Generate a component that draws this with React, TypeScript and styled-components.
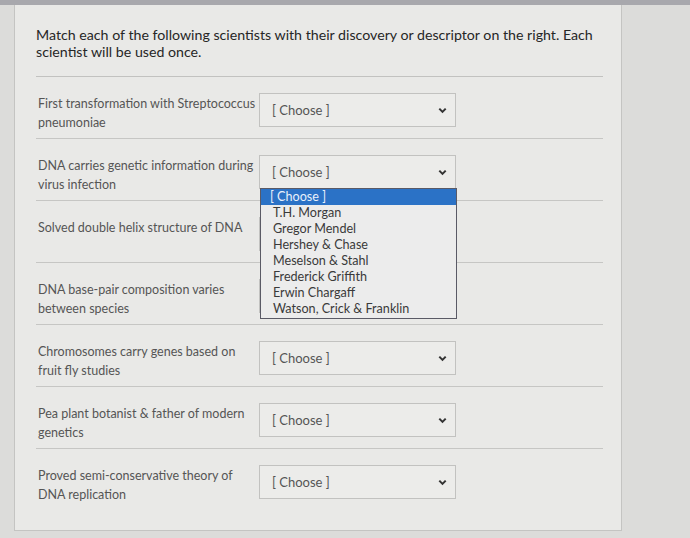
import React from "react";
import styled, { createGlobalStyle } from "styled-components";

const GlobalStyle = createGlobalStyle`
  html, body {
    margin: 0;
    padding: 0;
    background: #dedede;
    font-family: Lato, "Open Sans", sans-serif;
  }
`;

const SCIENTISTS = [
  "T.H. Morgan",
  "Gregor Mendel",
  "Hershey & Chase",
  "Meselson & Stahl",
  "Frederick Griffith",
  "Erwin Chargaff",
  "Watson, Crick & Franklin",
];

const QUESTIONS = [
  "First transformation with Streptococcus pneumoniae",
  "DNA carries genetic information during virus infection",
  "Solved double helix structure of DNA",
  "DNA base-pair composition varies between species",
  "Chromosomes carry genes based on fruit fly studies",
  "Pea plant botanist & father of modern genetics",
  "Proved semi-conservative theory of DNA replication",
];

const OPEN_INDEX = 1;
// rows whose select is hidden under the open list
const COVERED = [2, 3];

const Chevron = () => (
  <svg width="9" height="7" viewBox="0 0 9 7">
    <path d="M1.3 1.6 L4.5 4.9 L7.7 1.6" fill="none" stroke="#333" strokeWidth="2" />
  </svg>
);

const App = () => {
  return (
    <>
      <GlobalStyle />
      <Page>
        <TopBar />
        <Card>
          <Header>
            Match each of the following scientists with their discovery or descriptor on the right. Each
            scientist will be used once.
          </Header>
          {QUESTIONS.map((q, i) => (
            <Row key={q}>
              <Label>{q}</Label>
              <SelectWrap>
                {COVERED.includes(i) ? (
                  <Select />
                ) : (
                  <Select>
                    <span>[ Choose ]</span>
                    <Chevron />
                  </Select>
                )}
                {i === OPEN_INDEX && (
                  <Dropdown>
                    <Option selected>[ Choose ]</Option>
                    {SCIENTISTS.map((s) => (
                      <Option key={s}>{s}</Option>
                    ))}
                  </Dropdown>
                )}
              </SelectWrap>
            </Row>
          ))}
        </Card>
      </Page>
    </>
  );
};

const Page = styled.div`
  width: 690px;
  height: 538px;
  overflow: hidden;
  background: #dcdcda;
`;

const TopBar = styled.div`
  height: 5px;
  background: #a8a8ad;
`;

const Card = styled.div`
  margin-left: 14px;
  width: 567px;
  height: 525px;
  padding: 0 18px 0 21px;
  background: #e9e9e7;
  border: 1px solid #c4c4c2;
  border-top: none;
`;

const Header = styled.div`
  padding: 21px 0 16px;
  border-bottom: 1px solid #c2c2c0;
  font-size: 14.2px;
  line-height: 17px;
  color: #262626;
`;

const Row = styled.div`
  display: flex;
  align-items: flex-start;
  height: 46px;
  padding: 15px 0 0;
  border-bottom: 1px solid #c6c6c4;
  &:last-child {
    border-bottom: none;
  }
`;

const Label = styled.div`
  width: 218px;
  padding: 2px 3px 0 2px;
  font-size: 12.5px;
  line-height: 19px;
  color: #555;
`;

const SelectWrap = styled.div`
  position: relative;
  margin-top: 1px;
`;

const Select = styled.div`
  box-sizing: border-box;
  width: 197px;
  height: 34px;
  display: flex;
  align-items: center;
  justify-content: space-between;
  padding: 0 8px 0 12px;
  background: #ececea;
  border: 1px solid #c2c2c0;
  font-size: 13px;
  color: #555;
`;

const Dropdown = styled.div`
  position: absolute;
  left: 1px;
  top: 33px;
  width: 197px;
  box-sizing: border-box;
  border: 1px solid #5a5a66;
  background: #ececec;
  z-index: 2;
  padding-bottom: 1px;
`;

const Option = styled.div<{ selected?: boolean }>`
  height: 16px;
  line-height: 16px;
  padding-left: ${(p) => (p.selected ? 9 : 12)}px;
  font-size: 12.6px;
  color: ${(p) => (p.selected ? "#e8f0fb" : "#3a3a3a")};
  background: ${(p) => (p.selected ? "#2b72c6" : "transparent")};
  white-space: nowrap;
`;

export default App;
